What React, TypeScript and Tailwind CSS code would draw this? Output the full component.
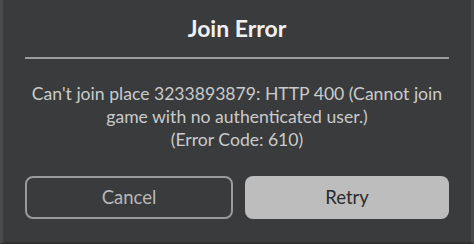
export default function App() {
  return (
    <div
      className="w-[474px] h-[244px] bg-[#393b3d] border-l-[3px] border-r-[3px] border-b-[2px] border-l-[#4a4b4d] border-r-[#48494b] border-b-[#2f3032] flex flex-col px-[22px]"
      style={{ fontFamily: "Lato, 'Open Sans', sans-serif" }}
    >
      <div className="h-[57px] flex items-center justify-center text-[23px] font-bold text-[#f0f0f0]">
        Join Error
      </div>
      <div className="h-[2px] bg-[#9c9c9c]" />
      <div className="mt-[23px] text-center text-[17.6px] leading-[23px] text-[#cbcbcb]">
        Can't join place 3233893879: HTTP 400 (Cannot join
        <br />
        game with no authenticated user.)
        <br />
        (Error Code: 610)
      </div>
      <div className="mt-[25px] flex gap-[12px]">
        <button className="flex-1 h-[43px] rounded-[8px] border-2 border-[#9a9a9a] text-[#b8b8b8] text-[18.5px]">
          Cancel
        </button>
        <button className="flex-1 h-[43px] rounded-[8px] bg-[#bdbdbd] text-[#2b2b2b] text-[18.5px]">
          Retry
        </button>
      </div>
    </div>
  );
}
